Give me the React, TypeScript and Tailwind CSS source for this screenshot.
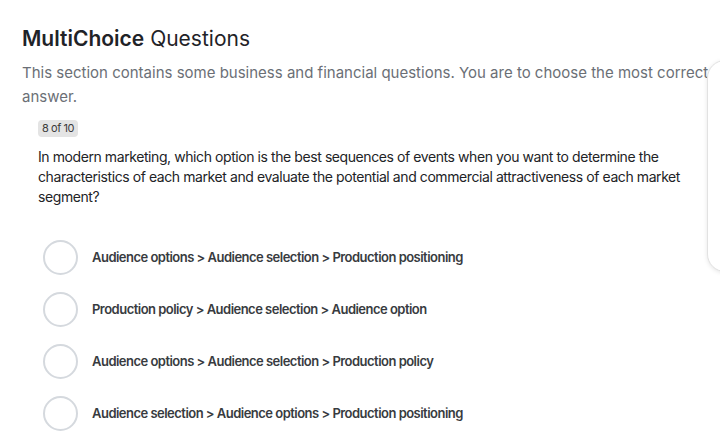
import React from "react";

const options = [
  "Audience options > Audience selection > Production positioning",
  "Production policy > Audience selection > Audience option",
  "Audience options > Audience selection > Production policy",
  "Audience selection > Audience options > Production positioning",
];

export default function App() {
  return (
    <div
      className="relative w-[720px] h-[440px] overflow-hidden bg-white"
      style={{ fontFamily: "Inter, 'Noto Sans', sans-serif" }}
    >
      <div className="absolute left-[707px] top-[60px] w-[60px] h-[212px] rounded-[18px] bg-white border border-[#e2e2e2] shadow-[0_1px_4px_rgba(0,0,0,0.1)]" />
      <div className="pl-[22px] pt-[24px]">
        <h1 className="text-[21px] leading-[30px] text-[#1f2328]">
          <span className="font-semibold">MultiChoice</span> Questions
        </h1>
        <p className="mt-[7px] text-[15px] leading-[24px] tracking-normal text-[#6b6f76]">
          This section contains some business and financial questions. You are to choose the most correct answer.
        </p>
        <div className="pl-[16px] pr-[18px]">
          <div className="mt-[11px] inline-flex items-center h-[17px] px-[4px] rounded-[4px] bg-[#e4e4e4] text-[11px] tracking-[-0.04em] text-[#3a3a3a]">
            8 of 10
          </div>
          <p className="mt-[9px] text-[14px] leading-[20px] tracking-[-0.03em] text-[#222326]">
            In modern marketing, which option is the best sequences of events when you want to determine the characteristics of each market and evaluate the potential and commercial attractiveness of each market segment?
          </p>
          <div className="mt-[33px] flex flex-col gap-[17px]">
            {options.map((o) => (
              <div key={o} className="flex items-center gap-[14px] pl-[5px]">
                <div className="w-[35px] h-[35px] rounded-full border-2 border-[#d5d9de] shrink-0" />
                <span className="text-[13px] font-semibold tracking-[-0.04em] text-[#383b40]">{o}</span>
              </div>
            ))}
          </div>
        </div>
      </div>
    </div>
  );
}
